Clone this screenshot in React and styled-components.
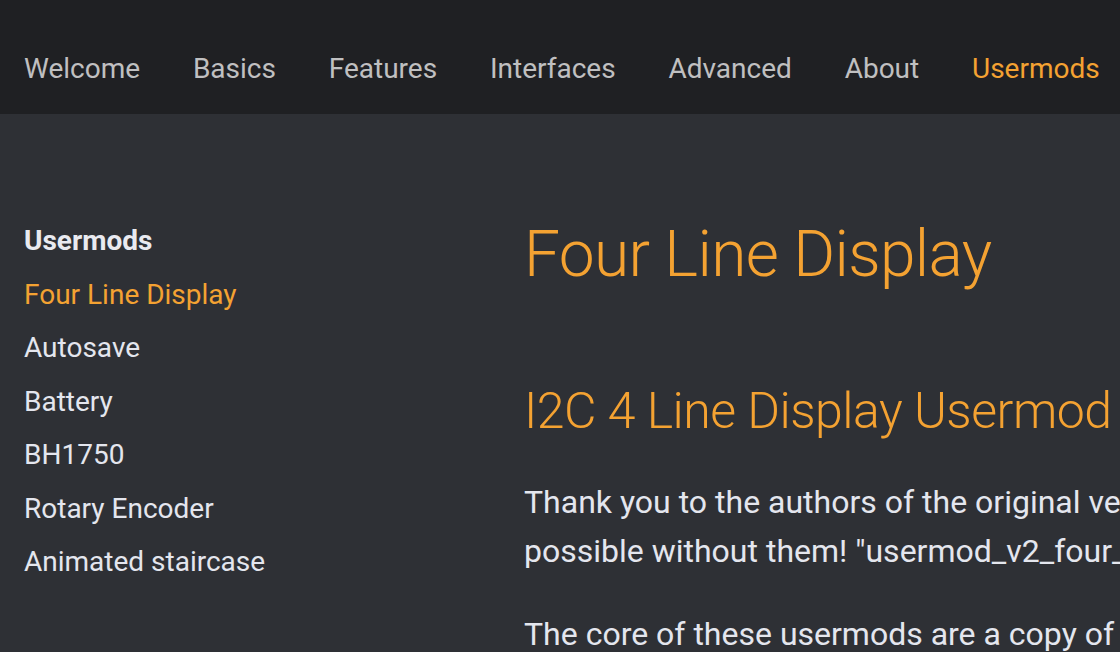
import React from "react";
import styled, { createGlobalStyle } from "styled-components";

const Global = createGlobalStyle`
  html, body {
    margin: 0;
    padding: 0;
    background: #2e3035;
    overflow: hidden;
    height: 652px;
  }
  body {
    font-family: Roboto, "Noto Sans", "Liberation Sans", sans-serif;
    -webkit-font-smoothing: antialiased;
  }
  * { box-sizing: border-box; }
`;

const Page = styled.div`
  width: 1120px;
  height: 652px;
  overflow: hidden;
  background: #2e3035;
  display: flex;
  flex-direction: column;
`;

const Header = styled.nav`
  height: 114px;
  flex: none;
  background: #1f2023;
  display: flex;
  align-items: center;
  padding: 24px 0 0 24px;
  gap: 52.8px;
  white-space: nowrap;
`;

const Tab = styled.a`
  font-size: 28px;
  line-height: 36px;
  font-weight: 400;
  color: ${(p) => (p.$active ? "#f4a232" : "rgba(255,255,255,0.72)")};
  text-decoration: none;
`;

const Main = styled.div`
  display: grid;
  grid-template-columns: 500px 1fr;
  padding: 98.8px 0 0 24px;
  min-width: 0;
`;

const Sidebar = styled.ul`
  list-style: none;
  margin: 10.5px 0 0;
  padding: 0;
  display: flex;
  flex-direction: column;
  gap: 17.5px;
`;

const NavItem = styled.li`
  font-size: 28px;
  line-height: 36px;
  white-space: nowrap;
  font-weight: ${(p) => (p.$title ? 700 : 400)};
  color: ${(p) => (p.$active ? "#f4a232" : p.$title ? "#e9eaf0" : "#e4e6ee")};
`;

const Content = styled.article`
  min-width: 0;
  color: #e4e6ee;
  white-space: nowrap;
`;

const H1 = styled.h1`
  margin: 0;
  font-size: 64px;
  line-height: 83.2px;
  font-weight: 300;
  color: #f4a232;
  letter-spacing: -0.01em;
`;

const H2 = styled.h2`
  margin: 80.2px 0 0;
  font-size: 50px;
  line-height: 70px;
  font-weight: 300;
  color: #f4a232;
  letter-spacing: -0.5px;
`;

const P = styled.p`
  margin: ${(p) => (p.$first ? "32.2px" : "33.9px")} 0 0;
  font-size: 32px;
  line-height: 49px;
  font-weight: 400;
  color: #e4e6ee;
`;

const tabs = ["Welcome", "Basics", "Features", "Interfaces", "Advanced", "About", "Usermods"];
const items = ["Four Line Display", "Autosave", "Battery", "BH1750", "Rotary Encoder", "Animated staircase"];

export default function App() {
  return (
    <Page>
      <Global />
      <Header>
        {tabs.map((t) => (
          <Tab key={t} $active={t === "Usermods"}>
            {t}
          </Tab>
        ))}
      </Header>
      <Main>
        <Sidebar>
          <NavItem $title>Usermods</NavItem>
          {items.map((it, i) => (
            <NavItem key={it} $active={i === 0}>
              {it}
            </NavItem>
          ))}
        </Sidebar>
        <Content>
          <H1>Four Line Display</H1>
          <H2>I2C 4 Line Display Usermod</H2>
          <P $first>
            Thank you to the authors of the original version of these usermods. It would not have been
            <br />
            possible without them! "usermod_v2_four_line_display" "usermod_v2_rotary_encoder_ui"
          </P>
          <P>The core of these usermods are a copy of the code from DST's Arduino ESP8266 I2C display.</P>
        </Content>
      </Main>
    </Page>
  );
}
